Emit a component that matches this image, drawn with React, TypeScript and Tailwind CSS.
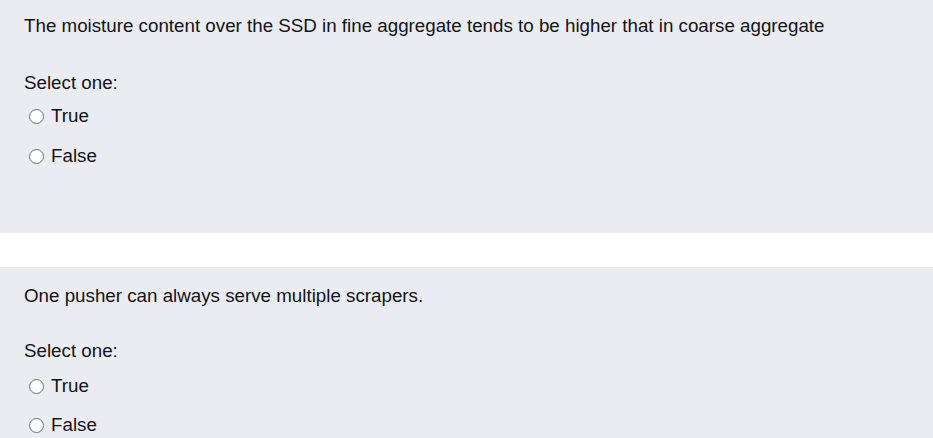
import React from "react";

function Radio({ label }: { label: string }) {
  return (
    <div className="flex items-center h-[24px]">
      <span className="ml-[5px] w-[15px] h-[15px] rounded-full border border-[#707070] bg-white shrink-0" />
      <span className="ml-[7px]">{label}</span>
    </div>
  );
}

export default function App() {
  return (
    <div
      className="w-[933px] h-[438px] overflow-hidden bg-white text-[18.75px] leading-[24px] text-[#111418]"
      style={{ fontFamily: '"Liberation Sans", Arial, sans-serif' }}
    >
      <div className="bg-[#ebecf1] px-[24px] pt-[14px] h-[233px]">
        <div className="h-[24px]">
          The moisture content over the SSD in fine aggregate tends to be higher that in coarse aggregate
        </div>
        <div className="h-[24px] mt-[33px]">Select one:</div>
        <div className="mt-[9px]">
          <Radio label="True" />
        </div>
        <div className="mt-[16px]">
          <Radio label="False" />
        </div>
      </div>
      <div className="h-[34px]" />
      <div className="bg-[#ebecf1] px-[24px] pt-[17px] h-[200px]">
        <div className="h-[24px]">One pusher can always serve multiple scrapers.</div>
        <div className="h-[24px] mt-[31px]">Select one:</div>
        <div className="mt-[11px]">
          <Radio label="True" />
        </div>
        <div className="mt-[15px]">
          <Radio label="False" />
        </div>
      </div>
    </div>
  );
}
